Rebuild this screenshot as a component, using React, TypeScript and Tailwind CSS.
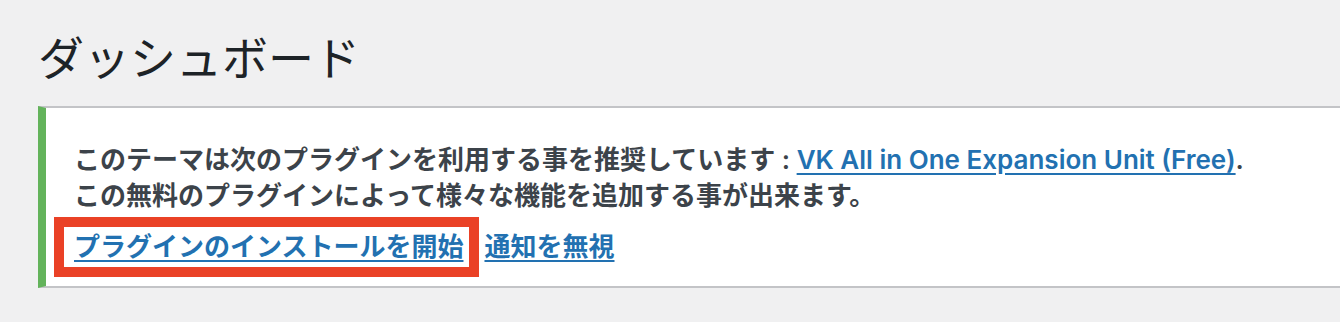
import React from "react";

const fontStack = "font-['Inter','Noto_Sans_CJK_JP',sans-serif]";

const App: React.FC = () => {
  return (
    <div className={`min-h-[322px] bg-[#f0f0f1] pt-[28px] ${fontStack}`}>
      <h1 className="pl-[38px] text-[46px] leading-[60px] font-normal text-[#1d2327]">ダッシュボード</h1>

      <div className="mt-[18px] ml-[38px] border-t-2 border-b-2 border-l-8 border-t-[#c3c4c7] border-b-[#c3c4c7] border-l-[#63b35b] bg-white pl-[28px] pt-[34px] pb-[9px]">
        <p className="text-[26px] leading-[36px] font-semibold text-[#3c434a]">
          このテーマは次のプラグインを利用する事を推奨しています :{" "}
          <a href="#" className="text-[#2271b1] underline underline-offset-4">
            VK All in One Expansion Unit (Free)
          </a>
          .
          <br />
          この無料のプラグインによって様々な機能を追加する事が出来ます。
        </p>

        <div className="mt-[3px] ml-[-20px] flex items-center gap-[5px] text-[26px] font-semibold">
          <span className="border-[10px] border-[#ea4126] pl-[10px] pr-[6px] leading-[40px]">
            <a href="#" className="text-[#2271b1] underline underline-offset-4">
              プラグインのインストールを開始
            </a>
          </span>
          <a href="#" className="text-[#2271b1] underline underline-offset-4 leading-[40px]">
            通知を無視
          </a>
        </div>
      </div>
    </div>
  );
};

export default App;
